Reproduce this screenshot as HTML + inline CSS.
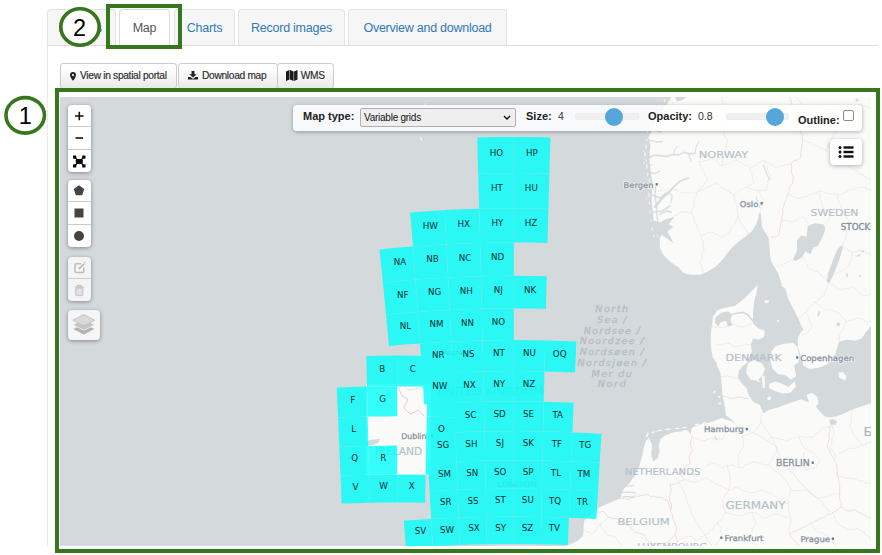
<!DOCTYPE html>
<html><head><meta charset="utf-8"><title>Map</title>
<style>
html,body{margin:0;padding:0;background:#fff;}
body{width:882px;height:555px;overflow:hidden;position:relative;font-family:"Liberation Sans",sans-serif;}
.abs{position:absolute;}
.tab{position:absolute;top:9px;height:36px;box-sizing:border-box;border:1px solid #e3e3e3;border-bottom:none;border-radius:4px 4px 0 0;background:#f6f6f6;color:#337ab7;font-size:12.5px;letter-spacing:-0.25px;line-height:36px;text-align:center;white-space:nowrap;}
.tab.act{background:#fff;color:#555;height:37px;border-color:#ddd;}
.btn{position:absolute;top:63px;height:26px;box-sizing:border-box;border:1px solid #ccc;background:linear-gradient(#fff 20%,#e9e9e9);color:#2b2b2b;-webkit-text-stroke:0.15px #2b2b2b;font-size:10.2px;line-height:23px;white-space:nowrap;border-radius:3px;letter-spacing:-0.3px;}
#map{position:absolute;left:60px;top:97px;width:811px;height:449px;background:#d4dadc;overflow:hidden;}
.ctl{position:absolute;background:#fff;border-radius:4px;box-shadow:0 1px 4px rgba(0,0,0,.38);}
.ctl .b{width:22.6px;height:22.45px;box-sizing:border-box;border-bottom:1px solid #ccc;position:relative;}
.ctl .b:last-child{border-bottom:none;}
.lbl{position:absolute;font-weight:bold;font-size:11px;color:#222;white-space:nowrap;}
.val{position:absolute;font-size:10.5px;color:#333;white-space:nowrap;}
.track{position:absolute;height:7px;border-radius:4px;background:rgba(238,238,238,.9);box-shadow:inset 0 0 1px rgba(0,0,0,.12);}
.thumb{position:absolute;width:18px;height:18px;border-radius:50%;background:#54a6db;}
</style></head><body>

<!-- tab bar -->
<div class="abs" style="left:47px;top:45px;width:831px;height:1px;background:#ddd;"></div>
<div class="abs" style="left:47px;top:45px;width:1px;height:501px;background:#eaeaea;"></div>
<div class="tab" style="left:47px;width:69px;text-align:right;padding-right:13.5px;letter-spacing:-0.5px;">Records</div>
<div class="tab act" style="left:119px;width:51px;">Map</div>
<div class="tab" style="left:174px;width:61px;">Charts</div>
<div class="tab" style="left:238px;width:107px;">Record images</div>
<div class="tab" style="left:348px;width:159px;">Overview and download</div>

<!-- buttons -->
<div class="btn" style="left:60px;width:117px;"><svg class="abs" style="left:9px;top:8px" width="6" height="9" viewBox="0 0 6 9"><path d="M3 0a3 3 0 0 1 3 3c0 2-3 6-3 6S0 5 0 3a3 3 0 0 1 3-3z" fill="#222"/><circle cx="3" cy="3" r="1.1" fill="#fff"/></svg><span class="abs" style="left:19px;">View in spatial portal</span></div>
<div class="btn" style="left:178px;width:100px;"><svg class="abs" style="left:9.300px;top:6.500px" width="10" height="9" viewBox="0 0 10 9"><path d="M3.500 0h3v3.200h2.300L5 6.600 1.200 3.200h2.300z" fill="#222"/><path d="M0 6h2.500l2.500 2 2.500-2H10V8.600H0z" fill="#222"/></svg><span class="abs" style="left:23px;">Download map</span></div>
<div class="btn" style="left:277px;width:57px;"><svg class="abs" style="left:7.700px;top:5.600px" width="12" height="11" viewBox="0 0 12 11"><path d="M0 1.600L3.500 0v9.400L0 11zM4 0l3.600 1.600V11L4 9.400zM8.100 1.600L11.500 0v9.400L8.100 11z" fill="#1a1a1a"/></svg><span class="abs" style="left:22.700px;">WMS</span></div>

<!-- map -->
<div id="map">
<svg class="abs" style="left:0;top:0" width="811" height="449" viewBox="0 0 811 449">
<g id="land">
<path d="M611.5,0.0 608.0,5.5 603.5,12.0 598.5,18.5 594.5,25.5 591.6,34.8 589.5,38.0 588.4,41.0 589.5,45.0 590.5,49.6 589.5,55.0 590.0,60.4 589.5,65.0 590.5,71.0 591.0,78.0 592.7,86.0 592.2,93.0 591.6,103.6 592.5,113.0 593.8,125.0 595.5,135.0 597.0,138.5 599.8,141.6 599.8,150.7 603.4,157.9 610.6,165.1 618.7,170.5 622.3,175.0 626.0,176.8 630.5,177.7 639.5,177.7 644.0,176.2 648.5,174.1 655.7,169.6 662.0,163.3 667.4,156.1 673.7,148.9 680.0,143.5 686.3,138.9 691.7,134.4 696.2,127.2 698.2,121.0 699.2,116.0 700.8,116.5 701.3,123.0 702.2,130.4 705.0,135.0 708.5,140.4 709.5,150.0 710.0,159.0 711.5,165.0 715.0,171.0 718.1,176.0 720.0,182.0 722.2,189.5 725.4,191.6 726.8,197.0 728.6,202.5 733.0,211.1 738.4,221.9 741.6,229.5 743.5,233.0 740.5,235.5 737.8,241.6 737.8,250.3 740.0,256.8 742.2,263.3 743.2,268.7 749.7,271.9 758.4,270.8 767.0,267.6 773.5,261.1 776.8,252.5 778.9,244.9 786.5,242.7 795.1,243.8 801.6,241.6 805.9,235.2 808.0,233.0 812.0,227.0 812.0,0.0Z" fill="#fafaf8"/>
<path d="M697.9,187.8 690.8,194.9 683.2,202.5 674.6,208.9 663.8,211.1 657.3,213.3 653.0,219.8 651.9,228.4 650.8,237.1 650.8,247.9 651.9,256.5 653.0,261.0 656.2,265.0 657.3,269.5 660.5,276.0 661.6,286.8 662.4,297.8 663.8,304.0 664.9,310.3 666.1,319.0 662.0,321.0 657.4,322.8 649.7,325.5 640.0,327.5 632.2,330.5 630.5,337.5 628.0,333.5 624.7,333.0 622.4,334.2 613.8,335.3 605.1,338.5 600.8,341.8 598.6,348.3 599.7,354.8 597.6,361.2 593.2,364.5 591.1,356.9 592.2,348.3 588.9,340.7 585.7,343.9 583.5,352.6 581.4,361.2 579.2,369.9 575.9,377.5 571.6,382.9 568.4,387.2 564.1,391.5 561.9,395.8 560.8,401.2 555.4,403.4 547.8,406.6 538.1,411.0 531.6,416.4 524.0,424.0 523.5,430.0 523.2,437.7 520.5,441.5 517.5,444.0 512.0,446.5 505.0,449.0 812.0,449.0 812.0,306.0 810.3,306.5 797.3,310.8 786.5,315.2 780.0,318.0 775.7,319.5 770.0,320.5 764.9,319.5 760.5,315.2 756.0,310.0 751.9,306.5 746.5,304.4 741.1,302.2 734.6,304.4 725.9,307.6 717.3,310.8 708.6,313.0 705.0,315.8 702.8,316.0 701.5,312.0 699.8,307.8 694.5,305.5 691.9,303.0 688.6,297.6 686.5,291.1 682.2,286.8 677.8,280.3 678.9,273.8 682.2,269.5 686.5,266.2 689.7,258.7 691.9,254.4 690.8,247.9 693.0,241.4 698.4,242.5 703.8,240.3 704.9,233.8 698.4,231.6 693.0,226.2 693.0,215.4 694.1,204.6 696.6,196.0Z" fill="#fafaf8"/>
<path d="M561.0,390.0 567.0,389.5 574.0,388.2" fill="none" stroke="#d4dadc" stroke-width="1.1" stroke-linecap="round"/>
<path d="M561.0,395.5 568.0,395.0 576.0,396.0" fill="none" stroke="#d4dadc" stroke-width="1.1" stroke-linecap="round"/>
<path d="M562.5,400.0 568.0,399.5 574.0,400.5" fill="none" stroke="#d4dadc" stroke-width="1.1" stroke-linecap="round"/>
<ellipse cx="587.3" cy="338.0" rx="1.0" ry="2.6" transform="rotate(25 587.3 338.0)" fill="#fafaf8"/>
<ellipse cx="593.0" cy="335.3" rx="2.2" ry="0.7" transform="rotate(-20 593.0 335.3)" fill="#fafaf8"/>
<ellipse cx="599.0" cy="333.6" rx="3" ry="0.7" transform="rotate(-12 599.0 333.6)" fill="#fafaf8"/>
<ellipse cx="608.0" cy="332.2" rx="3.2" ry="0.7" transform="rotate(-5 608.0 332.2)" fill="#fafaf8"/>
<ellipse cx="617.0" cy="331.4" rx="2.6" ry="0.7" transform="rotate(-3 617.0 331.4)" fill="#fafaf8"/>
<ellipse cx="624.5" cy="330.6" rx="2.2" ry="0.7" transform="rotate(-3 624.5 330.6)" fill="#fafaf8"/>
<ellipse cx="637.0" cy="327.5" rx="2.5" ry="0.7" transform="rotate(-8 637.0 327.5)" fill="#fafaf8"/>
<ellipse cx="644.0" cy="326.0" rx="2.2" ry="0.7" transform="rotate(-8 644.0 326.0)" fill="#fafaf8"/>
<path d="M655.1,220.8 661.6,215.4 668.1,214.4 672.4,217.6 670.3,223.0 672.4,228.4 668.1,229.5 665.9,224.1 660.5,225.2 658.4,229.5 655.1,226.2Z" fill="#d4dadc"/>
<path d="M672.4,217.6 678.0,216.0 683.2,215.4 688.0,218.0 693.0,224.0" fill="none" stroke="#d4dadc" stroke-width="1.6"/>
<path d="M701.5,278.0 704.5,279.0 705.0,291.0 703.0,291.0Z" fill="#fafaf8"/>
<path d="M716.8,223.0 719.0,223.2 718.8,225.0 716.8,224.8Z" fill="#fafaf8"/>
<path d="M687.8,266.6 694.1,263.0 701.6,266.2 704.9,271.6 702.7,278.1 697.3,283.5 690.8,282.5 686.0,276.0Z" fill="#fafaf8"/>
<path d="M711.4,254.4 715.7,248.9 724.3,246.8 733.0,245.7 737.3,250.0 739.5,258.7 738.4,265.2 734.1,268.4 735.1,273.8 736.2,279.2 730.8,282.5 725.4,278.1 717.8,277.1 712.4,271.6 710.3,263.0Z" fill="#fafaf8"/>
<path d="M709.2,286.8 715.7,284.6 722.2,286.8 728.6,290.0 734.1,284.6 736.2,288.9 730.8,295.4 723.2,296.5 715.7,294.4 709.2,291.1Z" fill="#fafaf8"/>
<path d="M746.5,297.9 751.9,295.7 757.3,300.0 758.4,306.5 754.1,311.9 749.7,306.5Z" fill="#fafaf8"/>
<path d="M778.9,275.2 783.2,275.2 786.5,279.5 785.4,283.8 778.9,280.6Z" fill="#fafaf8"/>
<path d="M704.3,203.3 709.0,203.3 708.5,206.0 704.8,206.0Z" fill="#fafaf8"/>
<path d="M747.8,128.9 754.6,126.2 764.1,127.6 765.4,133.0 761.4,142.5 757.3,149.2 753.2,150.6 750.5,157.3 745.1,154.6 742.4,160.0 735.7,164.1 733.0,162.7 737.0,153.3 737.0,143.8 741.1,138.4 746.5,139.8Z" fill="#d4dadc"/>
<path d="M781.6,147.9 783.0,150.6 778.9,164.1 773.5,177.6 769.5,185.7 766.8,184.4 768.1,176.2 773.5,161.4 777.6,151.9Z" fill="#d4dadc"/>
<path d="M769.0,323.0 773.0,322.0 776.8,324.0 776.0,328.0 771.0,327.5Z" fill="#d4dadc"/>
<path d="M306.0,287.0 371.0,287.0 371.0,378.3 306.0,378.3Z" fill="#fafaf8"/>
<path d="M306.0,344.0 312.0,342.5 320.0,342.0 318.0,346.0 311.0,348.5 306.0,349.0Z" fill="#d4dadc"/>
<path d="M615.0,0.0 626.5,0.0 622.0,3.5 617.0,4.5Z" fill="#d4dadc"/>
<path d="M584.0,61.5 588.4,60.7 594.0,58.2 600.3,58.5 606.0,59.5 613.2,57.5 619.0,57.8 624.1,55.3 629.0,56.8 634.9,56.4" fill="none" stroke="#d4dadc" stroke-width="1.5" stroke-linecap="round" stroke-linejoin="round" opacity="0.85"/>
<path d="M628.4,56.4 630.0,61.0 631.6,65.0" fill="none" stroke="#d4dadc" stroke-width="1.1" stroke-linecap="round" stroke-linejoin="round" opacity="0.85"/>
<path d="M634.9,56.4 636.0,50.0 639.2,44.5" fill="none" stroke="#d4dadc" stroke-width="1.1" stroke-linecap="round" stroke-linejoin="round" opacity="0.85"/>
<path d="M613.2,57.5 615.0,52.0 618.0,49.0" fill="none" stroke="#d4dadc" stroke-width="1.0" stroke-linecap="round" stroke-linejoin="round" opacity="0.85"/>
<path d="M586.0,43.0 590.5,43.4 596.0,45.0 602.4,44.5" fill="none" stroke="#d4dadc" stroke-width="1.3" stroke-linecap="round" stroke-linejoin="round" opacity="0.85"/>
<path d="M595.0,110.0 598.1,106.1 603.0,100.0 608.9,95.3 614.0,89.5 619.7,84.5 624.0,82.5 628.4,81.2" fill="none" stroke="#d4dadc" stroke-width="1.8" stroke-linecap="round" stroke-linejoin="round" opacity="0.85"/>
<path d="M608.9,95.3 612.0,99.0 611.0,106.0" fill="none" stroke="#d4dadc" stroke-width="1.2" stroke-linecap="round" stroke-linejoin="round" opacity="0.85"/>
<path d="M592.0,98.0 600.0,101.0 606.0,96.0" fill="none" stroke="#d4dadc" stroke-width="1.5" stroke-linecap="round" stroke-linejoin="round" opacity="0.85"/>
<path d="M593.0,115.0 602.0,114.0 610.0,109.0" fill="none" stroke="#d4dadc" stroke-width="1.5" stroke-linecap="round" stroke-linejoin="round" opacity="0.85"/>
<path d="M588.0,75.0 595.0,76.5 600.0,74.0" fill="none" stroke="#d4dadc" stroke-width="1.3" stroke-linecap="round" stroke-linejoin="round" opacity="0.85"/>
<path d="M586.0,67.0 592.0,68.0" fill="none" stroke="#d4dadc" stroke-width="1.2" stroke-linecap="round" stroke-linejoin="round" opacity="0.85"/>
<path d="M589.0,34.0 595.0,33.0 601.0,35.0" fill="none" stroke="#d4dadc" stroke-width="1.2" stroke-linecap="round" stroke-linejoin="round" opacity="0.85"/>
<path d="M593.0,25.0 599.0,24.0 604.0,27.0" fill="none" stroke="#d4dadc" stroke-width="1.2" stroke-linecap="round" stroke-linejoin="round" opacity="0.85"/>
<path d="M597.0,16.0 604.0,16.0 609.0,13.0" fill="none" stroke="#d4dadc" stroke-width="1.2" stroke-linecap="round" stroke-linejoin="round" opacity="0.85"/>
<path d="M593.5,123.6 599.8,125.4 607.0,121.8 614.2,120.0 608.8,127.2 613.3,129.9 607.0,134.4 610.6,139.8 613.3,146.2 607.0,141.6 601.6,138.0 599.8,141.6 594.4,134.4Z" fill="#d4dadc"/>
<ellipse cx="586.8" cy="43.0" rx="0.8" ry="1.6" fill="#eef0f0"/>
<ellipse cx="586.2" cy="49.5" rx="0.9" ry="2.2" fill="#eef0f0"/>
<ellipse cx="585.0" cy="57.0" rx="1.0" ry="2.6" fill="#eef0f0"/>
<ellipse cx="586.0" cy="63.5" rx="0.7" ry="1.6" fill="#eef0f0"/>
<ellipse cx="586.8" cy="69.5" rx="0.9" ry="2.4" fill="#eef0f0"/>
<ellipse cx="587.6" cy="77.5" rx="0.8" ry="2.0" fill="#eef0f0"/>
<ellipse cx="589.2" cy="83.5" rx="0.7" ry="1.5" fill="#eef0f0"/>
<ellipse cx="589.6" cy="90.5" rx="0.8" ry="2.0" fill="#eef0f0"/>
<ellipse cx="588.6" cy="98.0" rx="0.9" ry="2.4" fill="#eef0f0"/>
<ellipse cx="589.3" cy="106.5" rx="0.7" ry="1.8" fill="#eef0f0"/>
<ellipse cx="590.0" cy="115.0" rx="0.8" ry="2.0" fill="#eef0f0"/>
<ellipse cx="591.0" cy="123.5" rx="0.7" ry="1.8" fill="#eef0f0"/>
<ellipse cx="592.3" cy="131.5" rx="0.8" ry="1.8" fill="#eef0f0"/>
<ellipse cx="594.0" cy="139.0" rx="0.7" ry="1.5" fill="#eef0f0"/>
<ellipse cx="587.5" cy="35.0" rx="0.8" ry="1.5" fill="#eef0f0"/>
<ellipse cx="590.7" cy="28.0" rx="0.8" ry="1.6" fill="#eef0f0"/>
<ellipse cx="594.2" cy="20.0" rx="0.8" ry="1.6" fill="#eef0f0"/>
<ellipse cx="599.0" cy="11.0" rx="0.8" ry="1.6" fill="#eef0f0"/>
<ellipse cx="604.5" cy="3.5" rx="0.8" ry="1.4" fill="#eef0f0"/>
<ellipse cx="583.6" cy="54.0" rx="0.6" ry="1.2" fill="#eef0f0"/>
<ellipse cx="584.0" cy="66.0" rx="0.6" ry="1.2" fill="#eef0f0"/>
<ellipse cx="586.5" cy="101.0" rx="0.5" ry="1.2" fill="#eef0f0"/>
<path d="M595.5,90.0 595.0,99.0 596.5,109.0 597.0,119.0 598.5,129.0" fill="none" stroke="#d4dadc" stroke-width="1.5" stroke-linecap="round" stroke-linejoin="round" opacity="0.85"/>
<path d="M595.0,110.0 598.1,106.1 603.0,100.0 608.9,95.3" fill="none" stroke="#d4dadc" stroke-width="2.6" stroke-linecap="round" stroke-linejoin="round" opacity="0.85"/>
<path d="M600.0,117.0 606.0,114.0 611.0,115.0" fill="none" stroke="#d4dadc" stroke-width="1.8" stroke-linecap="round" stroke-linejoin="round" opacity="0.85"/>
<ellipse cx="361.2" cy="42.3" rx="0.7" ry="2.2" transform="rotate(-25 361.2 42.3)" fill="#fafaf8"/>
<ellipse cx="365.4" cy="8.5" rx="0.8" ry="2.2" transform="rotate(-15 365.4 8.5)" fill="#fafaf8"/>
<ellipse cx="364.3" cy="17.0" rx="0.7" ry="2.4" transform="rotate(-12 364.3 17.0)" fill="#fafaf8"/>
<ellipse cx="363.2" cy="26.5" rx="0.7" ry="2" transform="rotate(-15 363.2 26.5)" fill="#fafaf8"/>
<ellipse cx="366.6" cy="13.0" rx="0.5" ry="1.5" transform="rotate(-10 366.6 13.0)" fill="#fafaf8"/>
<ellipse cx="654.5" cy="295.0" rx="0.8" ry="1.6" transform="rotate(10 654.5 295.0)" fill="#fafaf8"/>
<ellipse cx="659.3" cy="299.8" rx="1.2" ry="0.9" transform="rotate(0 659.3 299.8)" fill="#fafaf8"/>
<ellipse cx="659.8" cy="306.5" rx="1.3" ry="0.9" transform="rotate(0 659.8 306.5)" fill="#fafaf8"/>
<ellipse cx="709.1" cy="301.2" rx="2.2" ry="1.6" transform="rotate(-15 709.1 301.2)" fill="#fafaf8"/>
<ellipse cx="698.0" cy="284.0" rx="1.6" ry="0.8" transform="rotate(30 698.0 284.0)" fill="#fafaf8"/>
<path d="M661.5,321.3 666.1,318.6 670.0,321.2 674.5,325.0 667.5,323.0Z" fill="#d4dadc"/>
<ellipse cx="758.8" cy="216.5" rx="1.0" ry="3.2" transform="rotate(15 758.8 216.5)" fill="#d6dcde"/>
<ellipse cx="778.3" cy="227.3" rx="1.8" ry="2.0" transform="rotate(0 778.3 227.3)" fill="#d6dcde"/>
<ellipse cx="798.5" cy="158.5" rx="2.2" ry="0.9" transform="rotate(-20 798.5 158.5)" fill="#d6dcde"/>
<ellipse cx="802.5" cy="154.5" rx="1.6" ry="0.8" transform="rotate(-10 802.5 154.5)" fill="#d6dcde"/>
<ellipse cx="787.0" cy="178.0" rx="1.0" ry="2.2" transform="rotate(-20 787.0 178.0)" fill="#d6dcde"/>
<ellipse cx="800.0" cy="179.0" rx="1.6" ry="0.8" transform="rotate(10 800.0 179.0)" fill="#d6dcde"/>
<ellipse cx="797.0" cy="3.0" rx="1.5" ry="1.5" transform="rotate(0 797.0 3.0)" fill="#d6dcde"/>
<path d="M632.5,338.2 631.4,342.3 630.2,346.4 631.2,349.9 632.5,353.4 630.1,356.6 629.0,360.5 630.2,366.3 627.3,368.1 624.3,369.8 622.5,373.9 620.8,378.0 624.3,382.7 620.7,384.3 617.3,386.2 613.9,387.4 610.3,387.4 610.8,390.4 611.4,393.3 610.0,396.7 609.1,400.3 609.7,404.0 611.4,407.3 611.6,410.4 610.3,413.2" fill="none" stroke="#e3b9c0" stroke-width="0.8" stroke-linejoin="round" opacity="0.55"/>
<path d="M559.9,401.5 564.0,401.7 568.1,402.6 571.3,400.2 575.1,399.1 578.3,399.3 581.4,398.6 584.5,397.9 587.7,397.5 590.7,399.6 593.9,399.1 597.3,400.5 600.9,400.3 604.3,402.3 607.9,403.8 608.5,407.0 610.1,409.9 610.3,413.2" fill="none" stroke="#e3b9c0" stroke-width="0.8" stroke-linejoin="round" opacity="0.55"/>
<path d="M610.3,413.2 612.3,417.1 612.6,421.4 614.3,424.9 616.1,428.4 616.5,431.6 615.9,434.7 614.9,437.8 616.5,441.1 617.3,444.8 616.0,449.0" fill="none" stroke="#e3b9c0" stroke-width="0.8" stroke-linejoin="round" opacity="0.55"/>
<path d="M532.0,417.0 535.6,415.3 539.7,415.1 543.5,414.3 545.9,417.2 548.2,420.2 552.2,421.4 556.4,421.4 558.7,423.7 561.1,426.0 564.1,427.4 567.3,428.4 570.4,429.6 572.5,432.7 575.1,435.4 578.3,436.1 581.5,436.6 584.5,437.8 586.1,441.8 589.2,444.8 592.1,446.4 595.3,446.9 598.5,447.1 601.7,447.1 604.7,446.0 607.9,445.9 609.9,442.9 612.3,440.3 614.9,437.8" fill="none" stroke="#e3b9c0" stroke-width="0.8" stroke-linejoin="round" opacity="0.55"/>
<path d="M662.0,299.0 666.2,299.5 670.0,301.5 674.1,301.2 678.0,300.0 681.4,300.3 684.6,301.6 688.0,301.5" fill="none" stroke="#e3b9c0" stroke-width="0.8" stroke-linejoin="round" opacity="0.55"/>
<path d="M771.4,324.5 771.1,327.8 769.7,330.9 770.0,334.3 768.7,337.7 769.5,341.5 768.4,344.9 767.2,348.3 767.9,351.4 770.0,353.9 770.6,357.1 772.8,359.5 774.4,363.1 776.3,366.6 777.0,370.6 777.2,374.4 777.4,378.1 778.4,381.8 779.1,385.3 779.8,388.7 779.7,392.3 779.7,395.8 779.2,399.4 779.9,402.8 781.4,406.2 781.1,409.7" fill="none" stroke="#e3b9c0" stroke-width="0.8" stroke-linejoin="round" opacity="0.55"/>
<path d="M781.1,409.7 778.6,411.9 776.0,414.0 772.8,415.3 770.4,417.4 767.0,417.6 764.7,420.0 761.6,420.9 758.8,422.2 756.0,423.8 753.4,425.6 750.4,426.5 747.4,427.5 745.1,429.9 741.9,430.5 739.2,432.1 736.0,434.1 732.3,434.9 729.5,437.7 731.7,440.4 733.7,443.3 736.8,445.8 739.2,449.0" fill="none" stroke="#e3b9c0" stroke-width="0.8" stroke-linejoin="round" opacity="0.55"/>
<path d="M781.1,409.7 784.1,411.5 786.7,413.9 791.0,414.0 795.1,412.5 797.6,414.8 800.9,415.9 803.5,418.1 807.5,420.2 812.0,420.9" fill="none" stroke="#e3b9c0" stroke-width="0.8" stroke-linejoin="round" opacity="0.55"/>
<path d="M729.3,0.0 730.8,2.7 731.6,5.7 731.9,8.9 733.3,11.6 735.3,14.2 734.8,17.6 736.7,20.2 738.0,23.2 738.7,26.4 738.6,29.8 740.1,32.8 741.0,35.9 742.2,39.0 742.2,42.3 742.6,45.5 741.5,48.5 741.8,51.6 740.8,54.6 740.9,57.7 740.4,60.8 737.3,62.7 733.8,63.8 731.1,66.3 731.5,69.6 731.7,73.0 731.6,76.4 733.2,79.6 733.0,83.0 732.5,86.2 730.1,88.6 729.1,91.6 728.9,94.9 727.4,97.7 726.7,101.6 724.6,105.0 723.8,108.8 722.5,112.4 723.4,116.3 721.6,119.8 721.9,123.6 720.5,126.4 720.2,129.5 719.8,132.5 719.6,135.6 718.2,138.4 714.7,140.1 710.8,140.2" fill="none" stroke="#e3b9c0" stroke-width="0.8" stroke-linejoin="round" opacity="0.55"/>
<path d="M701.5,317.0 700.7,321.4 701.5,325.9 703.8,328.4 705.1,331.7 707.7,334.0 708.9,337.4 711.3,339.9 714.8,341.1 718.4,341.6 722.0,342.5 725.3,344.1 728.9,343.4 732.0,341.3 735.6,340.5 739.2,339.9 742.7,340.0 746.2,340.5 749.7,340.1 753.2,339.9 755.7,336.8 759.3,334.8 761.6,331.5 764.8,330.5 768.0,329.7 771.4,330.1" fill="none" stroke="#e3b9c0" stroke-width="0.7" stroke-linejoin="round" opacity="0.36"/>
<path d="M711.3,339.9 712.8,342.5 713.6,345.5 715.4,348.0 716.3,350.9 716.9,353.9 715.4,356.8 713.4,359.4 712.4,362.6 710.4,365.1 708.5,367.8 710.9,370.6 713.6,373.0 716.7,374.7 719.5,377.0 722.5,379.0 724.0,381.9 726.4,384.3 728.3,387.0 730.0,389.8 730.9,393.0 734.4,393.7 737.8,393.4 741.3,393.8 744.8,393.0 748.0,393.9 750.3,396.6 753.2,398.0 755.8,400.1 758.8,401.4 762.5,400.2 766.5,400.4 770.0,398.6 773.0,396.9 776.5,396.8 779.7,395.8" fill="none" stroke="#e3b9c0" stroke-width="0.7" stroke-linejoin="round" opacity="0.36"/>
<path d="M730.9,393.0 729.8,396.4 728.8,399.8 728.4,403.3 728.1,406.9 728.4,410.5 729.0,414.0 729.5,417.5 730.9,420.9 730.9,424.3 730.0,427.6 729.3,430.9 729.1,434.3 729.5,437.7" fill="none" stroke="#e3b9c0" stroke-width="0.7" stroke-linejoin="round" opacity="0.36"/>
<path d="M675.0,390.2 678.4,391.2 681.6,392.9 684.9,394.2 688.4,394.8 691.8,395.8 695.6,395.1 699.1,393.7 702.9,393.0 705.6,394.5 708.4,396.0 711.6,396.5 714.1,398.6 716.8,400.5 719.2,402.7 722.2,404.2 725.1,405.6 728.1,406.9" fill="none" stroke="#e3b9c0" stroke-width="0.7" stroke-linejoin="round" opacity="0.36"/>
<path d="M633.7,340.6 636.9,341.5 639.8,343.3 643.0,344.0 646.0,343.1 649.0,341.9 652.0,341.0 655.2,342.3 658.8,341.6 662.0,343.0 664.4,339.2 666.0,335.0 668.8,333.5 672.0,333.8 675.0,333.0 677.4,335.0 680.0,336.6 682.0,339.0 685.4,338.3 688.7,337.0 692.0,336.0 694.5,333.6 697.3,331.5 698.8,328.1 701.5,325.9" fill="none" stroke="#e3b9c0" stroke-width="0.7" stroke-linejoin="round" opacity="0.36"/>
<path d="M645.4,369.8 647.9,367.7 651.0,366.9 654.0,366.0 656.5,367.9 659.6,368.9 662.0,371.0 664.8,369.3 668.3,369.3 671.1,367.5 674.0,368.9 677.1,369.7 680.0,371.0 683.3,370.1 685.9,367.7 689.1,366.8 692.0,365.0 695.4,365.0 698.6,366.0 701.8,367.2 705.1,368.0 708.5,367.8" fill="none" stroke="#e3b9c0" stroke-width="0.7" stroke-linejoin="round" opacity="0.36"/>
<path d="M667.6,367.5 667.5,371.0 669.0,374.2 669.3,377.7 670.0,381.0 670.0,384.1 670.1,387.2 669.1,390.2 668.8,393.3 672.2,392.3 675.0,390.2" fill="none" stroke="#e3b9c0" stroke-width="0.7" stroke-linejoin="round" opacity="0.36"/>
<path d="M624.3,382.7 627.7,384.1 631.4,384.6 635.0,385.0 638.9,384.4 642.2,382.0 646.0,381.0 649.6,382.5 652.7,384.9 656.0,387.0 659.4,388.2 662.6,389.7 665.7,391.6 668.8,393.3" fill="none" stroke="#e3b9c0" stroke-width="0.7" stroke-linejoin="round" opacity="0.36"/>
<path d="M668.8,393.3 666.3,396.4 664.3,399.8 662.0,403.0 663.3,405.9 663.4,409.2 664.2,412.3 666.0,415.0 664.1,417.6 662.6,420.5 660.7,423.0 658.0,425.0 658.4,428.2 660.8,430.7 660.6,434.1 662.0,437.0 660.4,439.9 659.3,443.2 657.0,445.8 656.0,449.0" fill="none" stroke="#e3b9c0" stroke-width="0.7" stroke-linejoin="round" opacity="0.36"/>
<path d="M617.3,444.8 619.6,442.6 622.3,441.3 625.3,440.4 628.0,439.0 631.7,439.5 634.4,442.2 638.0,443.0 641.1,440.6 644.3,438.4 648.0,437.0 649.4,434.1 652.2,432.3 653.9,429.7 656.2,427.5 658.0,425.0" fill="none" stroke="#e3b9c0" stroke-width="0.7" stroke-linejoin="round" opacity="0.36"/>
<path d="M666.0,415.0 669.4,416.3 672.8,417.5 676.3,418.8 680.0,419.0 683.1,418.3 685.8,416.5 689.0,416.0 692.0,415.0 695.3,416.0 698.4,417.2 701.0,419.5 704.0,421.0 707.1,420.4 709.8,418.5 712.9,417.6 716.0,417.0 719.3,417.7 722.4,419.3 725.7,420.0 729.0,421.0" fill="none" stroke="#e3b9c0" stroke-width="0.7" stroke-linejoin="round" opacity="0.36"/>
<path d="M692.0,415.0 692.8,418.1 693.6,421.1 695.2,423.9 696.0,427.0 694.0,429.8 692.3,432.7 692.2,436.3 690.0,439.0 691.3,442.7 693.7,445.9 696.0,449.0" fill="none" stroke="#e3b9c0" stroke-width="0.7" stroke-linejoin="round" opacity="0.36"/>
<path d="M682.0,339.0 683.3,342.2 683.4,345.7 684.0,349.0 681.8,352.2 679.4,355.3 678.0,359.0 678.7,362.0 678.9,365.0 678.8,368.1 680.0,371.0" fill="none" stroke="#e3b9c0" stroke-width="0.7" stroke-linejoin="round" opacity="0.36"/>
<path d="M739.2,339.9 739.9,342.9 740.9,345.8 742.9,348.2 744.0,351.0 747.9,353.2 752.0,355.0 755.0,357.3 757.1,360.6 760.0,363.0 757.5,366.7 756.0,371.0 752.6,371.4 749.3,371.9 746.0,373.0 743.6,370.6 742.6,367.2 740.0,365.0 742.1,362.0 743.5,358.7 744.0,355.0" fill="none" stroke="#e3b9c0" stroke-width="0.7" stroke-linejoin="round" opacity="0.36"/>
<path d="M778.4,356.7 781.2,355.4 784.2,354.4 786.7,352.5 790.0,351.3 793.6,351.5 796.9,350.6 800.1,348.9 803.5,348.3 807.5,346.2 812.0,345.5" fill="none" stroke="#e3b9c0" stroke-width="0.7" stroke-linejoin="round" opacity="0.36"/>
<path d="M777.0,379.0 780.1,379.5 783.1,380.2 786.1,381.2 789.2,381.2 792.3,381.8 795.8,381.9 798.7,384.2 802.4,383.8 805.3,386.1 808.9,385.9 812.0,387.4" fill="none" stroke="#e3b9c0" stroke-width="0.7" stroke-linejoin="round" opacity="0.36"/>
<path d="M792.0,313.0 791.9,316.0 790.7,318.9 791.4,322.1 791.0,325.1 790.0,328.0 791.5,331.3 792.6,334.7 793.9,338.0 796.0,341.0 798.3,343.7 800.4,346.4 803.5,348.3" fill="none" stroke="#e3b9c0" stroke-width="0.7" stroke-linejoin="round" opacity="0.36"/>
<path d="M750.4,426.5 752.9,429.3 754.9,432.7 758.0,435.0 761.6,435.6 764.9,437.2 768.0,439.0 770.0,441.5 772.3,443.8 773.7,446.8 776.0,449.0" fill="none" stroke="#e3b9c0" stroke-width="0.7" stroke-linejoin="round" opacity="0.36"/>
<path d="M772.8,415.3 773.9,418.3 775.4,421.2 776.1,424.3 778.0,427.0 781.3,429.1 784.8,430.7 788.0,433.0 791.3,432.1 794.8,432.3 798.0,431.0 800.0,433.6 803.3,434.6 805.1,437.5 808.0,439.0 812.0,443.0" fill="none" stroke="#e3b9c0" stroke-width="0.7" stroke-linejoin="round" opacity="0.36"/>
<path d="M540.0,427.0 541.3,430.8 544.0,433.7 546.0,437.0 549.3,438.5 552.9,439.2 556.0,441.0 557.9,443.7 560.0,446.3 562.0,449.0" fill="none" stroke="#e3b9c0" stroke-width="0.7" stroke-linejoin="round" opacity="0.36"/>
<path d="M523.5,433.0 526.3,434.5 529.5,434.9 532.0,437.0 534.7,435.0 536.0,432.0 537.9,429.4 540.0,427.0 543.1,425.2 545.5,422.6 548.2,420.2" fill="none" stroke="#e3b9c0" stroke-width="0.7" stroke-linejoin="round" opacity="0.36"/>
<path d="M656.0,248.0 659.3,247.3 662.7,247.0 666.0,246.0 669.6,246.6 672.6,248.7 676.0,250.0 679.3,248.9 682.9,248.8 686.0,247.0 691.0,248.0" fill="none" stroke="#e3b9c0" stroke-width="0.7" stroke-linejoin="round" opacity="0.36"/>
<path d="M652.0,229.0 655.2,230.4 658.7,229.9 662.0,231.0 665.3,229.6 668.4,227.7 672.0,227.0 675.4,227.9 678.5,229.5 682.0,230.0 685.9,229.3 689.3,227.3 693.0,226.0" fill="none" stroke="#e3b9c0" stroke-width="0.7" stroke-linejoin="round" opacity="0.36"/>
<path d="M659.0,281.0 661.9,280.0 664.9,279.1 668.0,279.0 671.3,279.9 674.5,281.1 678.0,281.0" fill="none" stroke="#e3b9c0" stroke-width="0.7" stroke-linejoin="round" opacity="0.36"/>
<path d="M600.0,94.0 602.9,92.8 606.1,93.5 608.9,91.7 612.0,92.0 615.2,92.5 618.2,93.5 620.9,95.3 624.0,96.0 627.2,95.7 630.4,95.7 633.7,96.1 636.9,95.9 639.7,93.7 643.3,93.2 645.8,90.7 649.2,89.8 652.1,87.8 655.4,86.7 658.3,87.8 660.7,89.9 663.4,91.3 666.1,92.8 668.7,94.4 671.2,96.2 673.9,97.7 676.3,95.4 679.2,93.6 682.4,92.4 685.0,90.4 688.2,91.3 691.5,91.8 694.6,93.0 698.0,93.0" fill="none" stroke="#e3b9c0" stroke-width="0.7" stroke-linejoin="round" opacity="0.36"/>
<path d="M638.8,64.5 640.2,67.7 641.3,71.0 643.8,73.5 644.5,77.0 646.0,80.2 648.0,83.0 645.2,85.1 643.8,88.4 641.6,91.0 638.5,92.8 636.9,95.9 636.6,98.9 634.5,101.5 633.9,104.4 634.4,107.7 633.4,110.5 631.8,113.2 631.4,116.2 632.9,118.8 634.4,121.5 634.3,124.8 636.1,127.2 636.7,130.3 638.9,132.6 639.6,135.6 640.6,138.4 641.0,141.4 642.9,144.1 643.3,147.1 643.2,150.3 644.3,153.2 642.5,155.9 641.4,158.8 641.7,162.3 640.0,165.0 641.3,168.7 642.2,172.5 644.0,176.0" fill="none" stroke="#e3b9c0" stroke-width="0.7" stroke-linejoin="round" opacity="0.36"/>
<path d="M673.9,97.7 674.4,100.9 674.6,104.1 676.0,107.1 676.8,110.3 677.2,113.4 677.9,116.6 677.6,119.9 679.1,122.6 680.7,125.2 682.3,127.9 684.5,130.1 686.0,132.8 687.6,135.5 688.7,138.4" fill="none" stroke="#e3b9c0" stroke-width="0.7" stroke-linejoin="round" opacity="0.36"/>
<path d="M638.8,64.5 642.3,64.2 645.6,63.6 648.9,62.6 652.0,61.0 655.0,62.4 657.5,64.4 659.0,67.6 662.0,69.0 664.8,67.7 667.8,67.0 670.3,65.1 673.2,64.1 676.0,63.0 678.8,64.6 681.7,66.1 684.3,68.0 687.6,68.6 690.0,71.0 693.0,69.7 695.9,68.3 698.1,65.7 701.2,64.5 704.0,63.0 706.8,65.4 710.1,66.9 713.3,68.5 716.0,71.0 718.8,69.5 722.0,69.1 724.8,67.3 728.3,67.9 731.1,66.3" fill="none" stroke="#e3b9c0" stroke-width="0.7" stroke-linejoin="round" opacity="0.36"/>
<path d="M662.0,0.0 662.3,3.1 663.2,6.1 663.8,9.2 665.0,12.1 666.0,15.0 665.0,17.9 663.4,20.5 662.4,23.4 660.4,25.9 660.0,29.0 661.1,32.1 663.6,34.4 664.2,37.8 666.0,40.4 668.0,43.0 666.8,46.1 665.9,49.4 665.9,52.8 664.3,55.8 663.6,59.1 663.2,62.4 662.3,65.6 662.0,69.0" fill="none" stroke="#e3b9c0" stroke-width="0.7" stroke-linejoin="round" opacity="0.36"/>
<path d="M690.0,71.0 690.5,74.6 692.2,78.0 692.6,81.6 694.0,85.0 691.4,87.5 688.1,88.8 685.0,90.4" fill="none" stroke="#e3b9c0" stroke-width="0.7" stroke-linejoin="round" opacity="0.36"/>
<path d="M607.0,0.0 609.3,2.7 612.2,4.9 614.0,8.1 616.0,11.0 619.4,12.2 622.9,13.2 626.6,13.5 630.0,15.0 631.9,18.1 634.8,20.2 637.7,22.3 640.0,25.0 643.1,24.3 646.0,23.1 649.0,22.1 652.0,21.0 654.7,19.6 658.0,19.4 660.5,17.6 663.3,16.5 666.0,15.0" fill="none" stroke="#e3b9c0" stroke-width="0.7" stroke-linejoin="round" opacity="0.36"/>
<path d="M631.4,116.2 627.6,115.3 623.9,114.5 620.0,115.0 617.8,117.7 614.5,118.8 612.0,121.0" fill="none" stroke="#e3b9c0" stroke-width="0.7" stroke-linejoin="round" opacity="0.36"/>
<path d="M640.6,138.4 644.5,137.7 648.1,135.7 652.0,135.0 655.4,136.8 659.1,138.3 662.0,141.0 664.3,138.6 667.2,136.8 670.0,135.0 670.9,131.7 672.6,128.8 675.2,126.3 676.2,123.0 677.6,119.9" fill="none" stroke="#e3b9c0" stroke-width="0.7" stroke-linejoin="round" opacity="0.36"/>
<path d="M698.0,93.0 700.0,96.3 701.3,100.1 704.0,103.0 702.9,106.2 701.1,109.2 700.8,112.7 700.0,116.0" fill="none" stroke="#e3b9c0" stroke-width="0.7" stroke-linejoin="round" opacity="0.36"/>
<path d="M704.0,63.0 704.7,66.2 707.1,68.7 707.4,72.1 708.4,75.2 710.0,78.0 710.0,81.2 707.7,83.8 708.2,87.2 706.8,90.0 706.0,93.0 702.0,93.6 698.0,93.0" fill="none" stroke="#e3b9c0" stroke-width="0.7" stroke-linejoin="round" opacity="0.36"/>
<path d="M742.2,42.3 745.2,43.7 748.1,45.3 751.5,45.7 753.9,48.6 757.3,49.1 760.2,50.7 763.1,52.2 766.2,53.4 768.9,55.1 771.6,56.8 773.8,59.2 776.5,60.9 779.4,62.3 781.5,64.8 784.5,66.1 787.4,67.5 789.8,69.7 792.1,71.9 795.3,72.8 798.1,74.5 800.4,77.1 803.6,78.1 806.0,80.5 808.9,81.8 812.0,83.0" fill="none" stroke="#e3b9c0" stroke-width="0.7" stroke-linejoin="round" opacity="0.36"/>
<path d="M727.4,97.7 730.9,97.8 733.7,100.4 736.9,101.2 740.4,101.4 743.2,99.5 746.8,99.6 749.6,97.6 752.7,96.4 756.1,96.0 758.8,94.0 762.0,94.2 765.0,95.3 767.9,96.6 771.1,96.9 774.2,97.0 777.3,97.7 780.7,97.5 783.8,96.2 786.9,94.7 789.8,92.9 793.2,92.7 796.3,91.4 799.5,90.4 802.7,90.5 805.9,90.9 808.9,92.4 812.0,93.0" fill="none" stroke="#e3b9c0" stroke-width="0.7" stroke-linejoin="round" opacity="0.36"/>
<path d="M721.9,123.6 725.4,123.4 728.6,124.4 732.0,125.0 735.1,124.0 738.0,122.4 740.9,120.8 744.1,119.9 745.9,123.5 748.0,127.0" fill="none" stroke="#e3b9c0" stroke-width="0.7" stroke-linejoin="round" opacity="0.36"/>
<path d="M758.8,94.0 759.7,97.5 759.9,101.1 761.1,104.5 762.0,108.0 763.3,111.1 765.4,113.5 767.7,115.8 770.0,118.0 769.1,121.2 768.0,124.3 766.0,127.0" fill="none" stroke="#e3b9c0" stroke-width="0.7" stroke-linejoin="round" opacity="0.36"/>
<path d="M777.3,97.7 777.6,101.0 778.7,104.0 779.9,106.9 781.3,109.9 782.0,113.0 784.3,115.8 785.7,119.2 787.9,122.1 790.0,125.0 788.8,128.5 787.8,131.9 786.6,135.4 786.0,139.0 785.2,142.2 783.7,145.2 782.0,148.0" fill="none" stroke="#e3b9c0" stroke-width="0.7" stroke-linejoin="round" opacity="0.36"/>
<path d="M790.0,125.0 792.7,126.8 795.8,127.7 798.8,128.6 802.0,129.0 805.0,126.9 808.4,125.6 812.0,125.0" fill="none" stroke="#e3b9c0" stroke-width="0.7" stroke-linejoin="round" opacity="0.36"/>
<path d="M716.0,170.0 718.8,168.4 721.9,167.4 725.1,166.5 728.0,165.0 730.8,163.3 734.0,163.0" fill="none" stroke="#e3b9c0" stroke-width="0.7" stroke-linejoin="round" opacity="0.36"/>
<path d="M743.0,160.0 744.2,162.8 746.2,165.2 747.4,167.9 748.0,171.0 751.2,172.6 754.6,173.8 758.0,175.0 760.3,177.7 763.2,179.8 765.5,182.5 768.0,185.0" fill="none" stroke="#e3b9c0" stroke-width="0.7" stroke-linejoin="round" opacity="0.36"/>
<path d="M768.0,185.0 767.5,188.6 766.3,192.1 764.6,195.4 764.0,199.0 760.4,200.5 757.7,203.7 754.0,205.0 752.5,207.9 749.6,209.7 747.8,212.4 746.0,215.0 743.1,216.9 741.3,220.0 738.4,221.9" fill="none" stroke="#e3b9c0" stroke-width="0.7" stroke-linejoin="round" opacity="0.36"/>
<path d="M768.0,185.0 771.1,186.9 774.2,188.6 776.7,191.5 780.0,193.0 782.9,191.8 786.1,191.3 789.3,190.8 792.0,189.0 794.6,190.8 796.7,193.1 798.9,195.3 801.1,197.6 804.0,199.0 808.0,197.9 812.0,197.0" fill="none" stroke="#e3b9c0" stroke-width="0.7" stroke-linejoin="round" opacity="0.36"/>
<path d="M754.0,205.0 757.1,206.8 760.4,208.4 762.6,211.6 766.0,213.0 769.1,212.8 772.1,213.3 775.0,214.6 778.0,215.0 780.0,217.5 781.7,220.2 784.3,222.3 786.0,225.0 784.1,227.8 783.7,231.3 782.0,234.2 780.0,237.0 779.2,240.9 778.9,244.9" fill="none" stroke="#e3b9c0" stroke-width="0.7" stroke-linejoin="round" opacity="0.36"/>
<path d="M746.0,215.0 747.9,217.5 748.7,220.5 749.2,223.6 750.5,226.3 752.0,229.0 750.3,231.9 748.5,234.7 746.0,237.0 741.0,237.5" fill="none" stroke="#e3b9c0" stroke-width="0.7" stroke-linejoin="round" opacity="0.36"/>
<path d="M786.0,225.0 788.9,223.8 792.1,223.4 794.9,221.8 798.0,221.0 801.6,221.7 804.5,224.0 808.0,225.0 812.0,223.0" fill="none" stroke="#e3b9c0" stroke-width="0.7" stroke-linejoin="round" opacity="0.36"/>
<path d="M782.0,148.0 784.4,149.9 786.6,152.1 789.0,153.9 792.0,155.0 795.5,155.1 798.6,153.6 802.0,153.0 805.1,155.5 808.8,156.7 812.0,159.0" fill="none" stroke="#e3b9c0" stroke-width="0.7" stroke-linejoin="round" opacity="0.36"/>
<path d="M773.5,177.6 776.9,175.8 780.4,174.4 784.0,173.0 786.6,171.0 788.6,168.4 789.6,165.2 792.0,163.0 791.8,159.0 792.0,155.0" fill="none" stroke="#e3b9c0" stroke-width="0.7" stroke-linejoin="round" opacity="0.36"/>
<path d="M736.0,0.0 738.2,2.5 740.2,5.0 742.1,7.7 744.2,10.3 746.0,13.0 749.3,13.3 752.4,14.7 755.5,15.9 758.8,16.3 762.0,17.0 765.1,15.9 767.7,13.9 770.1,11.7 773.4,11.0 776.0,9.0 778.7,11.1 782.2,11.6 785.4,12.7 788.0,15.0 791.0,13.0 794.0,11.1 797.1,9.1 800.0,7.0 802.7,8.8 805.9,9.3 808.8,10.5 812.0,11.0" fill="none" stroke="#e3b9c0" stroke-width="0.7" stroke-linejoin="round" opacity="0.36"/>
<path d="M776.0,9.0 777.4,11.8 777.3,15.0 777.5,18.1 779.4,20.8 780.1,23.8 780.0,27.0 778.0,29.6 776.2,32.2 775.8,35.8 773.4,38.1 772.0,41.0 771.1,44.4 768.7,47.0 767.4,50.2 766.2,53.4" fill="none" stroke="#e3b9c0" stroke-width="0.7" stroke-linejoin="round" opacity="0.36"/>
<path d="M338.0,291.0 340.4,294.8 342.0,299.0 345.3,300.6 348.0,303.0 345.6,306.8 344.0,311.0 347.0,314.0 350.0,317.0 354.2,315.4 358.0,313.0 361.1,315.9 364.0,319.0" fill="none" stroke="#e3b9c0" stroke-width="0.9" stroke-linejoin="round" opacity="0.8"/>
<path d="M338.0,291.0 340.9,289.7 344.0,289.0 346.5,291.7 350.0,293.0 354.1,292.3 358.0,291.0" fill="none" stroke="#e3b9c0" stroke-width="0.8" stroke-linejoin="round" opacity="0.6"/>
<path d="M666.0,319.0 669.0,321.7 672.0,324.4 675.0,327.0 678.8,329.0 682.8,330.6 686.8,332.0 691.1,335.0 696.0,337.0 701.1,339.9 706.0,343.0 710.8,346.4 716.0,349.0 717.8,354.1 720.0,359.0 722.6,364.3 726.0,369.0 729.7,373.3 734.0,377.0 736.3,380.6 738.9,384.0 742.0,387.0 744.9,390.8 748.5,393.8 752.0,397.0 755.3,399.7 758.5,402.6 762.0,405.0 764.3,408.6 767.4,411.6 770.0,415.0" fill="none" stroke="#d3dbe0" stroke-width="0.9" stroke-linejoin="round" stroke-linecap="round" opacity="0.55"/>
<path d="M616.0,381.0 619.1,385.9 622.0,391.0 624.5,395.8 626.0,401.0 627.7,406.1 630.0,411.0 631.4,416.3 634.0,421.0 637.1,425.9 640.0,431.0 643.4,435.8 646.0,441.0 649.3,444.8 652.0,449.0" fill="none" stroke="#d3dbe0" stroke-width="0.8" stroke-linejoin="round" stroke-linecap="round" opacity="0.55"/>
<path d="M771.0,324.0 772.1,328.3 773.3,332.6 774.0,337.0 772.0,340.8 771.9,345.2 770.0,349.0 772.2,352.9 774.5,356.8 776.0,361.0" fill="none" stroke="#d3dbe0" stroke-width="0.8" stroke-linejoin="round" stroke-linecap="round" opacity="0.55"/>
<path d="M703.4,68.2 706.0,75.0 709.7,83.0" fill="none" stroke="#d4dadc" stroke-width="1.2" stroke-linecap="round" stroke-linejoin="round" opacity="0.85"/>
<path d="M696.0,100.0 698.0,106.0 700.0,111.0" fill="none" stroke="#cfd7dc" stroke-width="1.0" stroke-linecap="round" stroke-linejoin="round" opacity="0.85"/>
<path d="M655.0,340.0 657.0,343.0" fill="none" stroke="#cfd7dc" stroke-width="1.2" stroke-linecap="round" stroke-linejoin="round" opacity="0.85"/><g font-family="DejaVu Sans, Liberation Sans, sans-serif">
<text x="638.8" y="60.9" font-size="9.19" fill="#b4c0ca" stroke="#b4c0ca" stroke-width="0.15" textLength="49.4" lengthAdjust="spacingAndGlyphs" >NORWAY</text>
<text x="750.5" y="119.2" font-size="9.19" fill="#b4c0ca" stroke="#b4c0ca" stroke-width="0.15" textLength="48.0" lengthAdjust="spacingAndGlyphs" >SWEDEN</text>
<text x="665.5" y="264.0" font-size="8.78" fill="#b4c0ca" stroke="#b4c0ca" stroke-width="0.15" textLength="56.2" lengthAdjust="spacingAndGlyphs" >DENMARK</text>
<text x="564.9" y="377.8" font-size="8.78" fill="#b4c0ca" stroke="#b4c0ca" stroke-width="0.15" textLength="75.4" lengthAdjust="spacingAndGlyphs" >NETHERLANDS</text>
<text x="557.4" y="428.2" font-size="9.47" fill="#b4c0ca" stroke="#b4c0ca" stroke-width="0.15" textLength="52.4" lengthAdjust="spacingAndGlyphs" >BELGIUM</text>
<text x="665.6" y="412.1" font-size="9.88" fill="#b4c0ca" stroke="#b4c0ca" stroke-width="0.15" textLength="59.9" lengthAdjust="spacingAndGlyphs" >GERMANY</text>
<text x="577.3" y="453.1" font-size="8.78" fill="#b4c0ca" stroke="#b4c0ca" stroke-width="0.15" textLength="69.9" lengthAdjust="spacingAndGlyphs" >LUXEMBOURG</text>
<text x="315.2" y="358.0" font-size="9.88" fill="#b4c0ca" stroke="#b4c0ca" stroke-width="0.15" textLength="47.1" lengthAdjust="spacingAndGlyphs" >IRELAND</text>
<text x="377.2" y="298.1" font-size="9.88" fill="#b4c0ca" stroke="#b4c0ca" stroke-width="0.15" textLength="106.2" lengthAdjust="spacingAndGlyphs" >UNITED KINGDOM</text>
<text x="437.0" y="390.4" font-size="7.96" fill="#9aa8b3" stroke="#9aa8b3" stroke-width="0.15" textLength="40.0" lengthAdjust="spacingAndGlyphs" >LONDON</text>
<text x="803.5" y="338.8" font-size="11.80" fill="#a9b5bf" stroke="#a9b5bf" stroke-width="0.15" textLength="9.0" lengthAdjust="spacingAndGlyphs" >Б</text>
<text x="563.6" y="90.5" font-size="7.96" fill="none" stroke="#fbfbfa" stroke-width="1.8" stroke-opacity=".75" textLength="30.0" lengthAdjust="spacingAndGlyphs">Bergen</text>
<text x="563.6" y="90.5" font-size="7.96" fill="#8795a2" stroke="#8795a2" stroke-width="0.3" textLength="30.0" lengthAdjust="spacingAndGlyphs">Bergen</text>
<rect x="595.6" y="86.1" width="2.2" height="2.4" fill="#66778a"/>
<text x="679.8" y="109.5" font-size="7.96" fill="none" stroke="#fbfbfa" stroke-width="1.8" stroke-opacity=".75" textLength="18.5" lengthAdjust="spacingAndGlyphs">Oslo</text>
<text x="679.8" y="109.5" font-size="7.96" fill="#8795a2" stroke="#8795a2" stroke-width="0.3" textLength="18.5" lengthAdjust="spacingAndGlyphs">Oslo</text>
<rect x="700.5" y="105.1" width="2.2" height="2.4" fill="#66778a"/>
<text x="740.2" y="263.9" font-size="7.96" fill="none" stroke="#fbfbfa" stroke-width="1.8" stroke-opacity=".75" textLength="53.9" lengthAdjust="spacingAndGlyphs">Copenhagen</text>
<text x="740.2" y="263.9" font-size="7.96" fill="#8795a2" stroke="#8795a2" stroke-width="0.3" textLength="53.9" lengthAdjust="spacingAndGlyphs">Copenhagen</text>
<rect x="736.1" y="259.3" width="2.2" height="2.4" fill="#66778a"/>
<text x="643.9" y="335.3" font-size="7.96" fill="none" stroke="#fbfbfa" stroke-width="1.8" stroke-opacity=".75" textLength="39.7" lengthAdjust="spacingAndGlyphs">Hamburg</text>
<text x="643.9" y="335.3" font-size="7.96" fill="#8795a2" stroke="#8795a2" stroke-width="0.3" textLength="39.7" lengthAdjust="spacingAndGlyphs">Hamburg</text>
<rect x="685.7" y="330.9" width="2.2" height="2.4" fill="#66778a"/>
<text x="716.0" y="369.1" font-size="8.50" fill="none" stroke="#fbfbfa" stroke-width="1.8" stroke-opacity=".75" textLength="33.7" lengthAdjust="spacingAndGlyphs">BERLIN</text>
<text x="716.0" y="369.1" font-size="8.50" fill="#8795a2" stroke="#8795a2" stroke-width="0.3" textLength="33.7" lengthAdjust="spacingAndGlyphs">BERLIN</text>
<rect x="751.6" y="364.4" width="2.2" height="2.4" fill="#66778a"/>
<text x="664.6" y="443.7" font-size="7.96" fill="none" stroke="#fbfbfa" stroke-width="1.8" stroke-opacity=".75" textLength="38.9" lengthAdjust="spacingAndGlyphs">Frankfurt</text>
<text x="664.6" y="443.7" font-size="7.96" fill="#8795a2" stroke="#8795a2" stroke-width="0.3" textLength="38.9" lengthAdjust="spacingAndGlyphs">Frankfurt</text>
<rect x="660.3" y="439.5" width="2.2" height="2.4" fill="#66778a"/>
<text x="740.4" y="444.7" font-size="7.96" fill="none" stroke="#fbfbfa" stroke-width="1.8" stroke-opacity=".75" textLength="29.7" lengthAdjust="spacingAndGlyphs">Prague</text>
<text x="740.4" y="444.7" font-size="7.96" fill="#8795a2" stroke="#8795a2" stroke-width="0.3" textLength="29.7" lengthAdjust="spacingAndGlyphs">Prague</text>
<rect x="771.8" y="440.5" width="2.2" height="2.4" fill="#66778a"/>
<text x="341.2" y="342.1" font-size="7.96" fill="none" stroke="#fbfbfa" stroke-width="1.8" stroke-opacity=".75" textLength="25.3" lengthAdjust="spacingAndGlyphs">Dublin</text>
<text x="341.2" y="342.1" font-size="7.96" fill="#8795a2" stroke="#8795a2" stroke-width="0.3" textLength="25.3" lengthAdjust="spacingAndGlyphs">Dublin</text>
<rect x="370.6" y="337.8" width="2.2" height="2.4" fill="#66778a"/>
<text x="380.5" y="257.5" font-size="7.96" fill="none" stroke="#fbfbfa" stroke-width="1.8" stroke-opacity=".75" textLength="22.5" lengthAdjust="spacingAndGlyphs">Glasgow</text>
<text x="380.5" y="257.5" font-size="7.96" fill="#8795a2" stroke="#8795a2" stroke-width="0.3" textLength="22.5" lengthAdjust="spacingAndGlyphs">Glasgow</text>
<text x="780.8" y="132.5" font-size="8.50" fill="none" stroke="#fbfbfa" stroke-width="1.8" stroke-opacity=".75" textLength="55.2" lengthAdjust="spacingAndGlyphs">STOCKHOLM</text>
<text x="780.8" y="132.5" font-size="8.50" fill="#8090a0" stroke="#8090a0" stroke-width="0.3" textLength="55.2" lengthAdjust="spacingAndGlyphs">STOCKHOLM</text>
<text transform="translate(535.2,215.2) scale(1.13,1)" font-size="8.5" font-style="italic" fill="#b4bec7" stroke="#b4bec7" stroke-width="0.35" textLength="29.2" lengthAdjust="spacing">North</text>
<text transform="translate(537.0,226.0) scale(1.13,1)" font-size="8.5" font-style="italic" fill="#b4bec7" stroke="#b4bec7" stroke-width="0.35" textLength="26.1" lengthAdjust="spacing">Sea /</text>
<text transform="translate(523.7,236.6) scale(1.13,1)" font-size="8.5" font-style="italic" fill="#b4bec7" stroke="#b4bec7" stroke-width="0.35" textLength="49.6" lengthAdjust="spacing">Nordsee /</text>
<text transform="translate(519.7,247.2) scale(1.13,1)" font-size="8.5" font-style="italic" fill="#b4bec7" stroke="#b4bec7" stroke-width="0.35" textLength="56.6" lengthAdjust="spacing">Noordzee /</text>
<text transform="translate(519.7,258.0) scale(1.13,1)" font-size="8.5" font-style="italic" fill="#b4bec7" stroke="#b4bec7" stroke-width="0.35" textLength="56.6" lengthAdjust="spacing">Nordsøen /</text>
<text transform="translate(517.5,268.8) scale(1.13,1)" font-size="8.5" font-style="italic" fill="#b4bec7" stroke="#b4bec7" stroke-width="0.35" textLength="60.6" lengthAdjust="spacing">Nordsjøen /</text>
<text transform="translate(531.5,279.7) scale(1.13,1)" font-size="8.5" font-style="italic" fill="#b4bec7" stroke="#b4bec7" stroke-width="0.35" textLength="35.8" lengthAdjust="spacing">Mer du</text>
<text transform="translate(537.7,290.3) scale(1.13,1)" font-size="8.5" font-style="italic" fill="#b4bec7" stroke="#b4bec7" stroke-width="0.35" textLength="24.8" lengthAdjust="spacing">Nord</text>
</g>
</g>
<g fill="#02fffa" opacity="0.8" stroke="none">
<path d="M307.0,289.6 322.1,289.4 337.2,289.3 337.2,274.0 337.2,258.6 321.8,258.7 306.3,259.0 306.7,274.4Z"/>
<path d="M337.2,289.3 352.4,289.4 367.5,289.6 367.8,274.4 368.2,259.0 352.7,258.7 337.2,258.6 337.2,274.0Z"/>
<path d="M278.1,320.5 292.9,320.0 307.6,319.6 307.3,304.7 307.0,289.6 291.9,290.0 276.8,290.6 277.4,305.7Z"/>
<path d="M307.6,319.6 322.4,319.4 337.2,319.3 337.2,304.4 337.2,289.3 322.1,289.4 307.0,289.6 307.3,304.7Z"/>
<path d="M279.3,349.8 293.8,349.3 308.3,348.9 308.0,334.3 307.6,319.6 292.9,320.0 278.1,320.5 278.7,335.3Z"/>
<path d="M280.5,378.5 294.7,378.0 308.9,377.7 308.6,363.4 308.3,348.9 293.8,349.3 279.3,349.8 279.9,364.3Z"/>
<path d="M308.9,377.7 323.0,377.5 337.2,377.4 337.2,363.1 337.2,348.6 322.8,348.7 308.3,348.9 308.6,363.4Z"/>
<path d="M281.6,406.6 295.5,406.2 309.4,405.8 309.1,391.8 308.9,377.7 294.7,378.0 280.5,378.5 281.1,392.7Z"/>
<path d="M309.4,405.8 323.3,405.6 337.2,405.6 337.2,391.5 337.2,377.4 323.0,377.5 308.9,377.7 309.1,391.8Z"/>
<path d="M337.2,405.6 351.2,405.6 365.1,405.8 365.3,391.8 365.6,377.7 351.4,377.5 337.2,377.4 337.2,391.5Z"/>
<path d="M366.2,348.9 380.7,349.3 395.2,349.8 395.8,335.3 396.4,320.5 381.6,320.0 366.8,319.6 366.5,334.3Z"/>
<path d="M367.5,289.6 382.6,290.0 397.7,290.6 398.4,275.4 399.1,260.0 383.6,259.4 368.2,259.0 367.8,274.4Z"/>
<path d="M366.8,319.6 381.6,320.0 396.4,320.5 397.0,305.7 397.7,290.6 382.6,290.0 367.5,289.6 367.2,304.7Z"/>
<path d="M365.6,377.7 379.8,378.0 394.0,378.5 394.6,364.3 395.2,349.8 380.7,349.3 366.2,348.9 365.9,363.4Z"/>
<path d="M418.2,76.6 436.0,76.3 453.8,76.1 453.8,58.2 453.8,40.0 435.5,40.1 417.2,40.5 417.7,58.7Z"/>
<path d="M453.8,76.1 471.6,76.3 489.4,76.6 489.9,58.7 490.4,40.5 472.1,40.1 453.8,40.0 453.8,58.2Z"/>
<path d="M419.2,111.7 436.5,111.4 453.8,111.3 453.8,93.8 453.8,76.1 436.0,76.3 418.2,76.6 418.7,94.3Z"/>
<path d="M453.8,111.3 471.1,111.4 488.4,111.7 488.9,94.3 489.4,76.6 471.6,76.3 453.8,76.1 453.8,93.8Z"/>
<path d="M352.9,149.4 369.7,148.2 386.5,147.2 385.6,130.3 384.7,113.1 367.4,114.2 350.2,115.5 351.6,132.5Z"/>
<path d="M386.5,147.2 403.3,146.5 420.1,145.9 419.7,129.0 419.2,111.7 401.9,112.3 384.7,113.1 385.6,130.3Z"/>
<path d="M420.1,145.9 437.0,145.6 453.8,145.5 453.8,128.5 453.8,111.3 436.5,111.4 419.2,111.7 419.7,129.0Z"/>
<path d="M453.8,145.5 470.7,145.6 487.5,145.9 488.0,129.0 488.4,111.7 471.1,111.4 453.8,111.3 453.8,128.5Z"/>
<path d="M322.9,185.4 339.1,183.9 355.4,182.5 354.2,166.1 352.9,149.4 336.2,150.8 319.5,152.5 321.2,169.0Z"/>
<path d="M355.4,182.5 371.8,181.4 388.1,180.5 387.3,164.0 386.5,147.2 369.7,148.2 352.9,149.4 354.2,166.1Z"/>
<path d="M388.1,180.5 404.5,179.8 421.0,179.3 420.5,162.7 420.1,145.9 403.3,146.5 386.5,147.2 387.3,164.0Z"/>
<path d="M421.0,179.3 437.4,178.9 453.8,178.8 453.8,162.3 453.8,145.5 437.0,145.6 420.1,145.9 420.5,162.7Z"/>
<path d="M326.0,217.5 341.9,216.1 357.8,214.9 356.6,198.8 355.4,182.5 339.1,183.9 322.9,185.4 324.5,201.6Z"/>
<path d="M357.8,214.9 373.8,213.8 389.7,212.9 389.0,196.8 388.1,180.5 371.8,181.4 355.4,182.5 356.6,198.8Z"/>
<path d="M389.7,212.9 405.7,212.2 421.8,211.8 421.4,195.6 421.0,179.3 404.5,179.8 388.1,180.5 389.0,196.8Z"/>
<path d="M421.8,211.8 437.8,211.5 453.8,211.4 453.8,195.2 453.8,178.8 437.4,178.9 421.0,179.3 421.4,195.6Z"/>
<path d="M453.8,211.4 469.8,211.5 485.9,211.8 486.3,195.6 486.7,179.3 470.2,178.9 453.8,178.8 453.8,195.2Z"/>
<path d="M329.0,249.0 344.5,247.6 360.1,246.4 359.0,230.7 357.8,214.9 341.9,216.1 326.0,217.5 327.5,233.3Z"/>
<path d="M360.1,246.4 375.6,245.4 391.2,244.6 390.5,228.8 389.7,212.9 373.8,213.8 357.8,214.9 359.0,230.7Z"/>
<path d="M391.2,244.6 406.9,243.9 422.5,243.5 422.1,227.7 421.8,211.8 405.7,212.2 389.7,212.9 390.5,228.8Z"/>
<path d="M422.5,243.5 438.2,243.2 453.8,243.1 453.8,227.3 453.8,211.4 437.8,211.5 421.8,211.8 422.1,227.7Z"/>
<path d="M362.2,277.2 377.4,276.3 392.7,275.5 392.0,260.1 391.2,244.6 375.6,245.4 360.1,246.4 361.1,261.9Z"/>
<path d="M392.7,275.5 407.9,274.9 423.2,274.5 422.9,259.1 422.5,243.5 406.9,243.9 391.2,244.6 392.0,260.1Z"/>
<path d="M423.2,274.5 438.5,274.2 453.8,274.1 453.8,258.7 453.8,243.1 438.2,243.2 422.5,243.5 422.9,259.1Z"/>
<path d="M453.8,274.1 469.1,274.2 484.4,274.5 484.8,259.1 485.1,243.5 469.5,243.2 453.8,243.1 453.8,258.7Z"/>
<path d="M484.4,274.5 499.7,274.9 515.0,275.5 515.7,260.1 516.4,244.6 500.8,243.9 485.1,243.5 484.8,259.1Z"/>
<path d="M364.2,307.4 379.1,306.5 394.0,305.8 393.3,290.7 392.7,275.5 377.4,276.3 362.2,277.2 363.2,292.4Z"/>
<path d="M394.0,305.8 408.9,305.2 423.9,304.8 423.6,289.7 423.2,274.5 407.9,274.9 392.7,275.5 393.3,290.7Z"/>
<path d="M423.9,304.8 438.8,304.5 453.8,304.5 453.8,289.4 453.8,274.1 438.5,274.2 423.2,274.5 423.6,289.7Z"/>
<path d="M453.8,304.5 468.8,304.5 483.7,304.8 484.1,289.7 484.4,274.5 469.1,274.2 453.8,274.1 453.8,289.4Z"/>
<path d="M395.3,335.4 409.9,334.8 424.5,334.5 424.2,319.7 423.9,304.8 408.9,305.2 394.0,305.8 394.6,320.7Z"/>
<path d="M424.5,334.5 439.2,334.2 453.8,334.1 453.8,319.4 453.8,304.5 438.8,304.5 423.9,304.8 424.2,319.7Z"/>
<path d="M453.8,334.1 468.5,334.2 483.1,334.5 483.4,319.7 483.7,304.8 468.8,304.5 453.8,304.5 453.8,319.4Z"/>
<path d="M483.1,334.5 497.7,334.8 512.4,335.4 513.0,320.7 513.6,305.8 498.7,305.2 483.7,304.8 483.4,319.7Z"/>
<path d="M367.9,365.8 382.2,365.0 396.5,364.4 395.9,350.0 395.3,335.4 380.7,336.1 366.1,336.9 367.0,351.5Z"/>
<path d="M396.5,364.4 410.8,363.9 425.1,363.5 424.8,349.1 424.5,334.5 409.9,334.8 395.3,335.4 395.9,350.0Z"/>
<path d="M425.1,363.5 439.5,363.3 453.8,363.2 453.8,348.7 453.8,334.1 439.2,334.2 424.5,334.5 424.8,349.1Z"/>
<path d="M453.8,363.2 468.2,363.3 482.5,363.5 482.8,349.1 483.1,334.5 468.5,334.2 453.8,334.1 453.8,348.7Z"/>
<path d="M482.5,363.5 496.8,363.9 511.1,364.4 511.7,350.0 512.4,335.4 497.7,334.8 483.1,334.5 482.8,349.1Z"/>
<path d="M511.1,364.4 525.5,365.0 539.7,365.8 540.6,351.5 541.5,336.9 527.0,336.1 512.4,335.4 511.7,350.0Z"/>
<path d="M369.6,394.2 383.6,393.4 397.6,392.8 397.1,378.7 396.5,364.4 382.2,365.0 367.9,365.8 368.8,380.1Z"/>
<path d="M397.6,392.8 411.7,392.3 425.7,392.0 425.4,377.8 425.1,363.5 410.8,363.9 396.5,364.4 397.1,378.7Z"/>
<path d="M425.7,392.0 439.8,391.7 453.8,391.7 453.8,377.5 453.8,363.2 439.5,363.3 425.1,363.5 425.4,377.8Z"/>
<path d="M453.8,391.7 467.9,391.7 481.9,392.0 482.2,377.8 482.5,363.5 468.2,363.3 453.8,363.2 453.8,377.5Z"/>
<path d="M481.9,392.0 496.0,392.3 510.0,392.8 510.6,378.7 511.1,364.4 496.8,363.9 482.5,363.5 482.2,377.8Z"/>
<path d="M510.0,392.8 524.0,393.4 538.0,394.2 538.9,380.1 539.7,365.8 525.5,365.0 511.1,364.4 510.6,378.7Z"/>
<path d="M371.2,422.0 384.9,421.2 398.7,420.7 398.2,406.8 397.6,392.8 383.6,393.4 369.6,394.2 370.4,408.1Z"/>
<path d="M398.7,420.7 412.5,420.2 426.2,419.9 426.0,406.0 425.7,392.0 411.7,392.3 397.6,392.8 398.2,406.8Z"/>
<path d="M426.2,419.9 440.0,419.7 453.8,419.6 453.8,405.7 453.8,391.7 439.8,391.7 425.7,392.0 426.0,406.0Z"/>
<path d="M453.8,419.6 467.6,419.7 481.4,419.9 481.6,406.0 481.9,392.0 467.9,391.7 453.8,391.7 453.8,405.7Z"/>
<path d="M481.4,419.9 495.2,420.2 508.9,420.7 509.5,406.8 510.0,392.8 496.0,392.3 481.9,392.0 481.6,406.0Z"/>
<path d="M508.9,420.7 522.7,421.2 536.4,422.0 537.2,408.1 538.0,394.2 524.0,393.4 510.0,392.8 509.5,406.8Z"/>
<path d="M345.9,451.0 359.3,450.1 372.8,449.2 372.0,435.7 371.2,422.0 357.5,422.8 343.8,423.8 344.8,437.5Z"/>
<path d="M372.8,449.2 386.2,448.6 399.7,448.0 399.2,434.4 398.7,420.7 384.9,421.2 371.2,422.0 372.0,435.7Z"/>
<path d="M399.7,448.0 413.2,447.5 426.8,447.2 426.5,433.6 426.2,419.9 412.5,420.2 398.7,420.7 399.2,434.4Z"/>
<path d="M426.8,447.2 440.3,447.0 453.8,447.0 453.8,433.3 453.8,419.6 440.0,419.7 426.2,419.9 426.5,433.6Z"/>
<path d="M453.8,447.0 467.3,447.0 480.9,447.2 481.1,433.6 481.4,419.9 467.6,419.7 453.8,419.6 453.8,433.3Z"/>
<path d="M480.9,447.2 494.4,447.5 507.9,448.0 508.4,434.4 508.9,420.7 495.2,420.2 481.4,419.9 481.1,433.6Z"/>
</g>
<g font-family="DejaVu Sans, Liberation Sans, sans-serif" font-size="8.700" fill="#0d2b2d" text-anchor="middle">
<text transform="translate(322.3,274.6) scale(1,1)">B</text>
<text transform="translate(352.9,274.6) scale(1,1)">C</text>
<text transform="translate(292.8,305.6) scale(1,1)">F</text>
<text transform="translate(322.7,304.9) scale(1,1)">G</text>
<text transform="translate(293.7,335.2) scale(1,1)">L</text>
<text transform="translate(294.6,364.2) scale(1,1)">Q</text>
<text transform="translate(323.3,363.7) scale(1,1)">R</text>
<text transform="translate(295.5,392.7) scale(1,1)">V</text>
<text transform="translate(323.6,392.1) scale(1,1)">W</text>
<text transform="translate(351.7,392.1) scale(1,1)">X</text>
<text transform="translate(381.5,335.2) scale(1,1)">O</text>
<text transform="translate(436.4,58.8) scale(1,1)">HO</text>
<text transform="translate(471.8,58.8) scale(1,1)">HP</text>
<text transform="translate(436.9,94.4) scale(1,1)">HT</text>
<text transform="translate(471.3,94.4) scale(1,1)">HU</text>
<text transform="translate(370.3,131.8) scale(1,1)">HW</text>
<text transform="translate(403.8,130.0) scale(1,1)">HX</text>
<text transform="translate(437.3,129.1) scale(1,1)">HY</text>
<text transform="translate(470.9,129.1) scale(1,1)">HZ</text>
<text transform="translate(340.0,168.0) scale(1,1)">NA</text>
<text transform="translate(372.5,165.4) scale(1,1)">NB</text>
<text transform="translate(405.1,163.7) scale(1,1)">NC</text>
<text transform="translate(437.7,162.9) scale(1,1)">ND</text>
<text transform="translate(342.8,200.6) scale(1,1)">NF</text>
<text transform="translate(374.5,198.2) scale(1,1)">NG</text>
<text transform="translate(406.3,196.6) scale(1,1)">NH</text>
<text transform="translate(438.2,195.8) scale(1,1)">NJ</text>
<text transform="translate(470.0,195.8) scale(1,1)">NK</text>
<text transform="translate(345.4,232.4) scale(1,1)">NL</text>
<text transform="translate(376.4,230.2) scale(1,1)">NM</text>
<text transform="translate(407.4,228.7) scale(1,1)">NN</text>
<text transform="translate(438.5,227.9) scale(1,1)">NO</text>
<text transform="translate(378.2,261.4) scale(1,1)">NR</text>
<text transform="translate(408.5,260.0) scale(1,1)">NS</text>
<text transform="translate(438.9,259.3) scale(1,1)">NT</text>
<text transform="translate(469.3,259.3) scale(1,1)">NU</text>
<text transform="translate(499.7,260.0) scale(1,1)">OQ</text>
<text transform="translate(379.9,292.0) scale(1,1)">NW</text>
<text transform="translate(409.5,290.6) scale(1,1)">NX</text>
<text transform="translate(439.2,290.0) scale(1,1)">NY</text>
<text transform="translate(469.0,290.0) scale(1,1)">NZ</text>
<text transform="translate(410.5,320.6) scale(1,1)">SC</text>
<text transform="translate(439.6,320.0) scale(1,1)">SD</text>
<text transform="translate(468.6,320.0) scale(1,1)">SE</text>
<text transform="translate(497.7,320.6) scale(1,1)">TA</text>
<text transform="translate(383.0,351.1) scale(1,1)">SG</text>
<text transform="translate(411.4,349.9) scale(1,1)">SH</text>
<text transform="translate(439.9,349.3) scale(1,1)">SJ</text>
<text transform="translate(468.3,349.3) scale(1,1)">SK</text>
<text transform="translate(496.8,349.9) scale(1,1)">TF</text>
<text transform="translate(525.2,351.1) scale(1,1)">TG</text>
<text transform="translate(384.4,379.8) scale(1,1)">SM</text>
<text transform="translate(412.3,378.7) scale(1,1)">SN</text>
<text transform="translate(440.1,378.1) scale(1,1)">SO</text>
<text transform="translate(468.0,378.1) scale(1,1)">SP</text>
<text transform="translate(495.9,378.7) scale(1,1)">TL</text>
<text transform="translate(523.8,379.8) scale(1,1)">TM</text>
<text transform="translate(385.8,407.9) scale(1,1)">SR</text>
<text transform="translate(413.1,406.8) scale(1,1)">SS</text>
<text transform="translate(440.4,406.3) scale(1,1)">ST</text>
<text transform="translate(467.8,406.3) scale(1,1)">SU</text>
<text transform="translate(495.1,406.8) scale(1,1)">TQ</text>
<text transform="translate(522.4,407.9) scale(1,1)">TR</text>
<text transform="translate(360.4,437.0) scale(1,1)">SV</text>
<text transform="translate(387.1,435.5) scale(1,1)">SW</text>
<text transform="translate(413.9,434.4) scale(1,1)">SX</text>
<text transform="translate(440.7,433.9) scale(1,1)">SY</text>
<text transform="translate(467.5,433.9) scale(1,1)">SZ</text>
<text transform="translate(494.3,434.4) scale(1,1)">TV</text>
</g>
</svg>

<!-- zoom control -->
<div class="ctl" style="left:8.2px;top:7.7px;width:22.6px;">
 <div class="b"><svg class="abs" style="left:0;top:0" width="22" height="21"><path d="M7 11h8.600M11.300 6.700v8.600" stroke="#111" stroke-width="1.600" fill="none"/></svg></div>
 <div class="b"><svg class="abs" style="left:0;top:0" width="22" height="21"><path d="M7.500 11h7.600" stroke="#111" stroke-width="1.600" fill="none"/></svg></div>
 <div class="b"><svg class="abs" style="left:0;top:0" width="23" height="23"><g fill="#0a0a0a"><rect x="7.800" y="8.900" width="7" height="5" rx="1.400"/><rect x="5" y="5.400" width="3.300" height="3.300" rx=".5"/><rect x="14.200" y="5.400" width="3.300" height="3.300" rx=".5"/><rect x="5" y="14.200" width="3.300" height="3.300" rx=".5"/><rect x="14.200" y="14.200" width="3.300" height="3.300" rx=".5"/><path d="M7 7.400l2 2M15.600 7.400l-2 2M7 15.500l2-2M15.600 15.500l-2-2" stroke="#0a0a0a" stroke-width="1.300"/></g></svg></div>
</div>
<!-- draw control -->
<div class="ctl" style="left:8.2px;top:82.8px;width:22.6px;">
 <div class="b"><svg class="abs" style="left:0;top:0" width="22" height="22"><path d="M11 5.300l5.200 3.800-2 6.100H7.800l-2-6.100z" fill="#444"/></svg></div>
 <div class="b"><svg class="abs" style="left:0;top:0" width="22" height="22"><rect x="6.500" y="6.500" width="9" height="9" fill="#444"/></svg></div>
 <div class="b"><svg class="abs" style="left:0;top:0" width="22" height="22"><circle cx="11" cy="11" r="5" fill="#444"/></svg></div>
</div>
<!-- edit control -->
<div class="ctl" style="left:8.2px;top:159.6px;width:22.6px;background:#f4f4f4;">
 <div class="b"><svg class="abs" style="left:0;top:0" width="23" height="23"><path d="M13 6.800H8.400a1.400 1.400 0 0 0-1.400 1.400v6a1.400 1.400 0 0 0 1.400 1.400h6a1.400 1.400 0 0 0 1.400-1.400V10.500" stroke="#bcbcbc" stroke-width="1.500" fill="none"/><path d="M10.800 12.200l5.200-5.400" stroke="#bcbcbc" stroke-width="1.800"/><circle cx="17" cy="5.600" r=".8" fill="#bcbcbc"/></svg></div>
 <div class="b"><svg class="abs" style="left:0;top:0" width="23" height="23"><path d="M6.800 8.200h9M9.600 8V6.400h3.400V8" stroke="#c2c2c2" stroke-width="1.200" fill="none"/><rect x="7.700" y="9" width="7.200" height="7.600" rx=".8" fill="#d6d6d6" stroke="#c2c2c2" stroke-width=".9"/><path d="M9.800 10v5.600M11.300 10v5.600M12.800 10v5.600" stroke="#f4f4f4" stroke-width=".7"/></svg></div>
</div>
<!-- layers -->
<div class="ctl" style="left:8.2px;top:213.3px;width:31.5px;height:30px;background:#f6f6f6;">
 <svg class="abs" style="left:0;top:0" width="32" height="30"><path d="M15.800 13.400l11 5.700-11 5.700-11-5.700z" fill="#b2b2b2" stroke="#f6f6f6" stroke-width=".5"/><path d="M15.800 9l11 5.700-11 5.700-11-5.700z" fill="#c6c6c6" stroke="#f6f6f6" stroke-width=".7"/><path d="M15.800 4.500l11 5.700-11 5.700-11-5.700z" fill="#dadada" stroke="#b0b0b0" stroke-width=".6"/></svg>
</div>

<!-- map type panel -->
<div class="ctl" style="left:233px;top:8px;width:569px;height:26px;background:rgba(255,255,255,.84);box-shadow:0 1px 4px rgba(0,0,0,.3);">
 <span class="lbl" style="left:10px;top:5px;">Map type:</span>
 <div class="abs" style="left:67px;top:3px;width:156px;height:19px;box-sizing:border-box;border:1px solid #b0b0b0;border-radius:2px;background:#efefef;font-size:10px;line-height:17px;color:#111;padding-left:3px;letter-spacing:-0.25px;">Variable grids<svg class="abs" style="right:4px;top:6px" width="8" height="6"><path d="M1 1l3 3 3-3" stroke="#111" stroke-width="1.400" fill="none"/></svg></div>
 <span class="lbl" style="left:233px;top:5px;">Size:</span>
 <span class="val" style="left:265px;top:5px;">4</span>
 <div class="track" style="left:282px;top:8px;width:64px;"></div>
 <div class="thumb" style="left:312px;top:3px;"></div>
 <span class="lbl" style="left:355px;top:5px;">Opacity:</span>
 <span class="val" style="left:405px;top:5px;">0.8</span>
 <div class="track" style="left:433px;top:8px;width:63px;"></div>
 <div class="thumb" style="left:473px;top:3px;"></div>
 <span class="lbl" style="left:505px;top:9px;">Outline:</span>
 <div class="abs" style="left:550px;top:5.300px;width:11px;height:10.500px;box-sizing:border-box;border:1px solid #8a8a8a;border-radius:2px;background:#fff;"></div>
</div>
<!-- legend button -->
<div class="ctl" style="left:770px;top:42px;width:32px;height:26px;box-shadow:0 1px 4px rgba(0,0,0,.3);">
 <svg class="abs" style="left:0;top:0" width="32" height="26"><g fill="#111"><circle cx="10" cy="8.500" r="1.500"/><circle cx="10" cy="13" r="1.500"/><circle cx="10" cy="17.500" r="1.500"/><rect x="13.500" y="7.300" width="10" height="2.400"/><rect x="13.500" y="11.800" width="10" height="2.400"/><rect x="13.500" y="16.300" width="10" height="2.400"/></g></svg>
</div>
</div>

<!-- annotations -->
<svg class="abs" style="left:0;top:0" width="882" height="555" viewBox="0 0 882 555">
<rect x="57" y="90" width="821" height="461" fill="none" stroke="#38761d" stroke-width="4"/>
<rect x="108" y="6" width="72" height="41" fill="none" stroke="#38761d" stroke-width="4"/>
<ellipse cx="80" cy="27" rx="19.2" ry="18.2" fill="#fff" stroke="#38761d" stroke-width="3.600"/>
<ellipse cx="25.2" cy="115.35" rx="19.25" ry="17.75" fill="#fff" stroke="#38761d" stroke-width="3.600"/>
<g font-family="Liberation Sans, sans-serif" font-size="23.5" fill="#000" text-anchor="middle">
<text x="79.5" y="35.9">2</text>
<text x="25.3" y="123.7">1</text>
</g>
</svg>
</body></html>
